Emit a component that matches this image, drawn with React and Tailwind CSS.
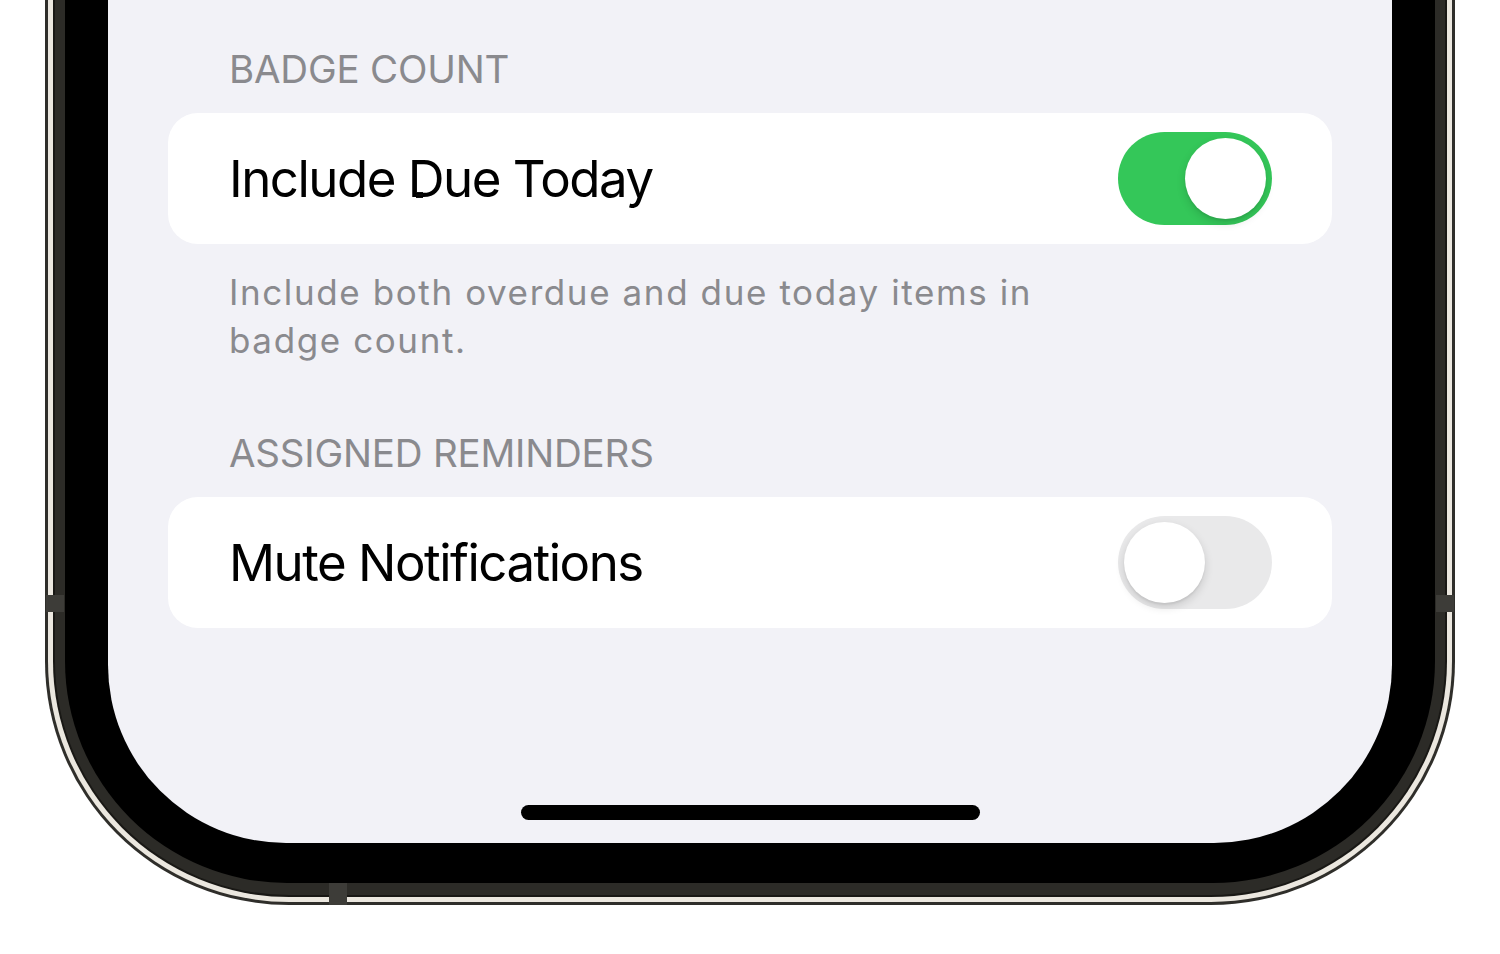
import React from "react";

const font = { fontFamily: "Inter, 'Noto Sans', sans-serif" };

function Toggle({ on }) {
  return (
    <div
      className={
        "flex h-[93px] w-[154px] shrink-0 items-center rounded-full p-[6px] " +
        (on ? "justify-end bg-[#34c759]" : "justify-start bg-[#e9e9ea]")
      }
    >
      <div className="h-[81px] w-[81px] rounded-full bg-white shadow-[0_4px_10px_rgba(0,0,0,0.14),0_2px_2px_rgba(0,0,0,0.06)]" />
    </div>
  );
}

function SectionHeader({ children }) {
  return (
    <div className="pl-[61px] text-[38.5px] leading-[48px] text-[#8a8a8e] tracking-[-0.2px]">
      {children}
    </div>
  );
}

function Row({ label, on, cursor }) {
  return (
    <div className="relative flex h-[131px] items-center justify-between rounded-[30px] bg-white pl-[61px] pr-[60px]">
      <span className="text-[51px] leading-[62px] text-black tracking-[-1.5px]">{label}</span>
      <Toggle on={on} />
      {cursor && (
        <svg
          className="absolute left-[247px] top-[78px]"
          width="10"
          height="10"
          viewBox="0 0 10 10"
        >
          <path d="M1 1.5h7M1 4h7M1 6.5h7" stroke="#111" strokeWidth="1.2" />
        </svg>
      )}
    </div>
  );
}

export default function App() {
  return (
    <div className="h-[954px] w-[1500px] overflow-hidden bg-white px-[45px]" style={font}>
      <div className="relative h-[905px]">
        {/* stainless band layers */}
        <div className="h-full rounded-b-[244px] bg-[#2f2e2a] px-[3px] pb-[3px]">
          <div className="h-full rounded-b-[241px] bg-[#ebe7df] px-[5px] pb-[5px]">
            <div className="h-full rounded-b-[236px] bg-[#191815] px-[2px] pb-[2px]">
              <div className="h-full rounded-b-[234px] bg-[#2c2b27] px-[10px] pb-[12px]">
                <div className="h-full rounded-b-[222px] bg-black px-[43px] pb-[40px]">
                  {/* screen */}
                  <div className="flex h-full flex-col rounded-b-[178px] bg-[#f2f2f7] px-[60px] pt-[45px]">
                    <SectionHeader>BADGE COUNT</SectionHeader>
                    <div className="mt-[20px]">
                      <Row label="Include Due Today" on cursor />
                    </div>
                    <div className="mt-[24px] pl-[61px] text-[35px] leading-[48px] text-[#8a8a8e] tracking-[1.6px]">
                      Include both overdue and due today items in
                      <br />
                      badge count.
                    </div>
                    <div className="mt-[65px]">
                      <SectionHeader>ASSIGNED REMINDERS</SectionHeader>
                    </div>
                    <div className="mt-[20px]">
                      <Row label="Mute Notifications" on={false} />
                    </div>
                    <div className="mt-auto mb-[23px] h-[15px] w-[459px] self-center rounded-full bg-black" />
                  </div>
                </div>
              </div>
            </div>
          </div>
        </div>
        {/* antenna lines */}
        <div className="absolute left-[1px] top-[595px] h-[17px] w-[18px] bg-[#3d3c38]" />
        <div className="absolute right-[1px] top-[595px] h-[17px] w-[18px] bg-[#3d3c38]" />
        <div className="absolute bottom-0 left-[284px] h-[22px] w-[18px] bg-[#3d3c38]" />
      </div>
    </div>
  );
}
